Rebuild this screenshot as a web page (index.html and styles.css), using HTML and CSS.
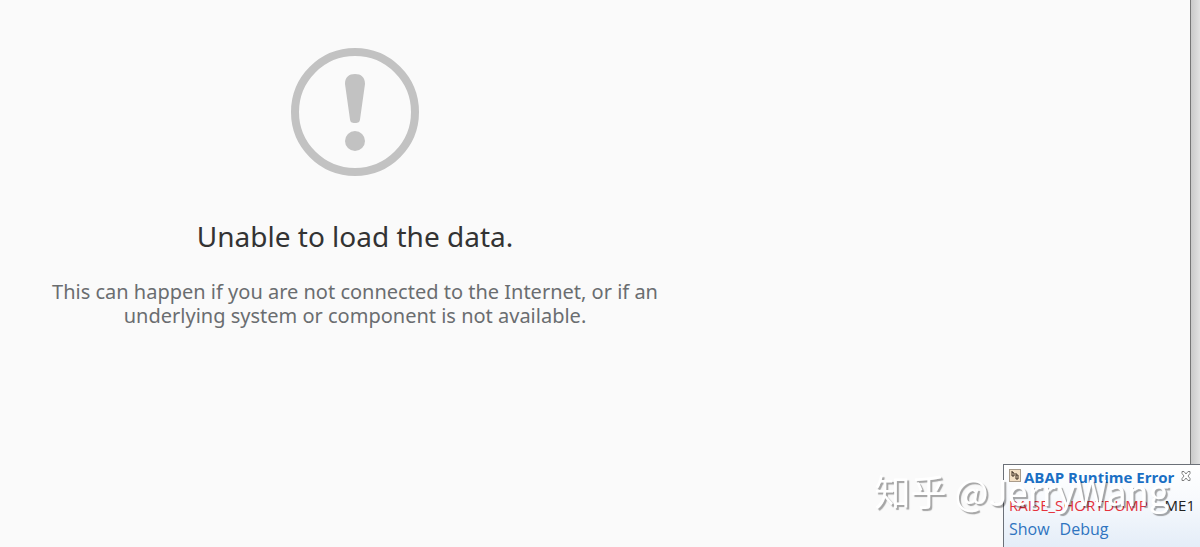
FILE: index.html
```
<!DOCTYPE html>
<html lang="en">
<head>
    <meta charset="UTF-8">
    <meta name="viewport" content="width=device-width, initial-scale=1.0">
    <title>Unable to load the data</title>
    <link rel="stylesheet" href="styles.css">
</head>
<body>

    <main class="page">
        <section class="message">
            <svg class="message-icon" viewBox="0 0 128 128" aria-hidden="true">
                <circle cx="64" cy="64" r="60" fill="none" stroke="currentColor" stroke-width="8"/>
                <path fill="currentColor" d="M54 36C54 29 58 26 64 26s10 3 10 10L69 71.500C68.700 74 67.500 75 64 75s-4.700-1-5-3.500z"/>
                <circle cx="64" cy="93" r="10" fill="currentColor"/>
            </svg>
            <h1>Unable to load the data.</h1>
            <p>This can happen if you are not connected to the Internet, or if an underlying system or component is not available.</p>
        </section>
    </main>

    <!-- Runtime error popup -->
    <aside class="popup">
        <div class="popup-header">
            <svg class="popup-icon" viewBox="0 0 12 13" aria-hidden="true">
                <rect x="0.500" y="0.500" width="11" height="12" fill="#f3dfc4" stroke="#a99c8c"/>
                <path d="M3 2v5h2V4M5 4L3 3M7 4v6M7 6h2v4H7" fill="none" stroke="#3c2c20" stroke-width="1"/>
            </svg>
            <h2>ABAP Runtime Error</h2>
            <button class="popup-close" aria-label="Close">
                <svg viewBox="0 0 10 10" aria-hidden="true">
                    <path d="M1 .5h2l2 2.500 2-2.500h2v2L7 5l2 2.500v2H7L5 7 3 9.500H1v-2L3 5 1 2.500z" fill="#fff" stroke="#666" stroke-width=".8"/>
                </svg>
            </button>
        </div>
        <p class="popup-text"><span class="error-code">RAISE_SHORTDUMP</span> <span>ME1</span></p>
        <div class="popup-links">
            <a href="#">Show</a>
            <a href="#">Debug</a>
        </div>
    </aside>

    <div class="watermark">知乎 @JerryWang</div>

</body>
</html>
```

FILE: styles.css
```
* {
    box-sizing: border-box;
}
body {
    margin: 0;
    min-height: 100vh;
    display: flex;
    background: linear-gradient(to right, #cacaca, #e2e2e2) right / 9px 100% no-repeat #fafafa;
    padding-right: 9px;
    font-family: "Noto Sans", sans-serif;
}
h1, h2, p {
    margin: 0;
    font-weight: normal;
}
.page {
    flex: 1;
    padding: 48px 40px;
    background-color: #fafafa;
    border-right: 1px solid #777;
}
.message {
    max-width: 630px;
    text-align: center;
}
.message-icon {
    display: block;
    width: 128px;
    height: 128px;
    margin: 0 auto 40px;
    color: #c2c2c2;
}
.message h1 {
    font-size: 28px;
    line-height: 40px;
    color: #333;
}
.message p {
    margin-top: 24px;
    font-size: 20px;
    line-height: 24px;
    color: #6a6d70;
}
.popup {
    position: fixed;
    right: 0;
    bottom: 0;
    width: 197px;
    padding: 0 5px 6px;
    border: 1px solid #6b7078;
    border-width: 1px 0 0 1px;
    background: linear-gradient(to bottom, #fff, #f8fafd 40%, #e4edf8);
    font-family: "Open Sans", sans-serif;
    font-size: 15px;
    line-height: 24px;
    white-space: nowrap;
}
.popup-header {
    display: flex;
    align-items: center;
    gap: 3px;
}
.popup-icon {
    flex-shrink: 0;
    width: 12px;
    height: 13px;
    margin-bottom: 4px;
}
.popup h2 {
    font-size: 15px;
    font-weight: bold;
    color: #1a6fc4;
}
.popup-close {
    flex-shrink: 0;
    margin: 0 4px 2px auto;
    padding: 0;
    border: none;
    background: none;
    line-height: 0;
    cursor: pointer;
}
.popup-close svg {
    width: 10px;
    height: 10px;
}
.popup-text {
    display: flex;
    justify-content: space-between;
    margin-top: 4px;
    color: #222;
}
.error-code {
    color: #e5323c;
}
.popup-links {
    display: flex;
    gap: 10px;
    font-size: 16px;
}
.popup-links a {
    color: #2f74c0;
    text-decoration: none;
}
.watermark {
    position: fixed;
    right: 31px;
    bottom: 31px;
    font-family: "Noto Sans CJK SC", sans-serif;
    font-size: 36px;
    line-height: 52px;
    color: #fff;
    text-shadow: 2px 2px 1px rgba(0, 0, 0, 0.35);
    pointer-events: none;
}
```
